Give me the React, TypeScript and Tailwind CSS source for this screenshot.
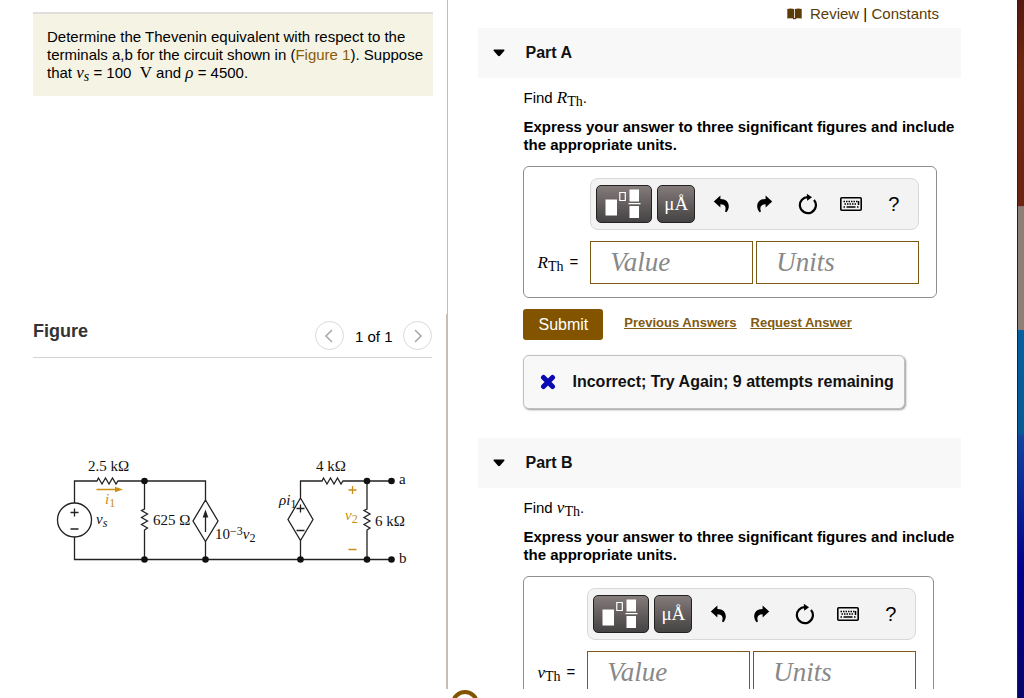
import type { ReactNode } from 'react'

interface SymbolProps {
  base: string
  sub: string
}

function MathSymbol({ base, sub }: SymbolProps) {
  return (
    <span className="font-['Liberation_Serif',serif] text-[17px] leading-none">
      <i>{base}</i>
      <span className="relative top-[3px] text-[14px]">{sub}</span>
    </span>
  )
}

function BookIcon() {
  return (
    <svg width="15" height="12" viewBox="0 0 15 12" fill="#5a3c08" aria-hidden="true">
      <path d="M0.300 1Q3.500 0 7 1V10.600Q3.500 10 0.300 10.600ZM7.800 1Q11.500 0 14.700 1V10.600Q11.500 10 7.800 10.600Z" />
      <path d="M6 10h3v1.200h-3z" />
    </svg>
  )
}

function TemplateIcon() {
  return (
    <svg width="54" height="36" viewBox="0 0 54 36" aria-hidden="true">
      <path fill="#fff" d="M8.500 13.500h11.500v16h-11.500zM32.500 3.500h9.500v12h-9.500zM32.500 20h9.500v12h-9.500zM31.500 17h12v1.300h-12z" />
      <path fill="none" stroke="#fff" strokeWidth="1.200" d="M22.800 6.500h5.500v8h-5.500z" />
    </svg>
  )
}

function UndoIcon() {
  return (
    <svg width="17" height="18" viewBox="0 0 17 18" aria-hidden="true">
      <path d="M0.800 6.600L7.400 0.600V4C13 4 15.800 7 15.800 11.500C15.800 13.600 14.800 15.800 13.400 17.200L12 16.600C13.600 12.200 12.200 9.400 7.400 9.200V12.600Z" />
    </svg>
  )
}

function RedoIcon() {
  return (
    <svg width="17" height="18" viewBox="0 0 17 18" aria-hidden="true">
      <path d="M16.200 6.600L9.600 0.600V4C4 4 1.200 7 1.200 11.500C1.200 13.600 2.200 15.800 3.600 17.200L5 16.600C3.400 12.200 4.800 9.400 9.600 9.200V12.600Z" />
    </svg>
  )
}

function ResetIcon() {
  return (
    <svg width="20" height="22" viewBox="0 0 20 22" aria-hidden="true">
      <path d="M10.500 4.200A8 8 0 1 0 16 7" fill="none" stroke="#000" strokeWidth="2.200" />
      <path d="M8.800 0.800L14 4.300L9.200 7.800Z" />
    </svg>
  )
}

function KeyboardIcon() {
  return (
    <svg width="22" height="14" viewBox="0 0 22 14" aria-hidden="true">
      <rect x="0.800" y="0.800" width="20.400" height="12.400" rx="1" fill="none" stroke="#000" strokeWidth="1.600" />
      <path d="M3.500 4.500H18.500M4.500 7H17" stroke="#000" strokeWidth="1.500" strokeDasharray="1.500 1" />
      <path d="M3.500 10h1.500M6.500 10h9M17 10h1.500M18.500 4v4" stroke="#000" strokeWidth="1.500" />
    </svg>
  )
}

function ToolButton({ label, children }: { label: string; children: ReactNode }) {
  return (
    <button type="button" aria-label={label} className="flex w-[43px] items-center justify-center text-[20px]">
      {children}
    </button>
  )
}

const darkButton =
  'flex h-[38px] items-center justify-center rounded-[5px] border border-[#222] bg-linear-to-b from-[#857b7b] to-[#454343] text-white'

const field =
  "h-[43px] w-[163px] border border-[#7a5a14] bg-white px-[19px] font-['Liberation_Serif',serif] text-[27px] italic placeholder:text-[#888]"

function AnswerBox({ base, sub }: SymbolProps) {
  return (
    <div className="flex w-fit items-end rounded-md border border-[#8e8e8e] bg-white pt-[11px] pr-[17px] pb-[13px] pl-[13px]">
      <div className="mr-3 flex h-[43px] items-center gap-[6px] whitespace-nowrap text-[15px]">
        <MathSymbol base={base} sub={sub} />
        <span>=</span>
      </div>
      <div>
        <div className="flex items-center gap-[5px] rounded-lg border border-[#d8d8d8] bg-[#f3f3f3] py-[6px] pr-[3px] pl-[5px]">
          <button type="button" aria-label="Templates" className={`${darkButton} w-14`}>
            <TemplateIcon />
          </button>
          <button
            type="button"
            className={`${darkButton} w-[38px] font-['Liberation_Serif',serif] text-[19px]`}
          >
            μÅ
          </button>
          <div className="flex">
            <ToolButton label="Undo"><UndoIcon /></ToolButton>
            <ToolButton label="Redo"><RedoIcon /></ToolButton>
            <ToolButton label="Reset"><ResetIcon /></ToolButton>
            <ToolButton label="Keyboard"><KeyboardIcon /></ToolButton>
            <ToolButton label="Help">?</ToolButton>
          </div>
        </div>
        <div className="mt-[11px] flex gap-[3px]">
          <input type="text" aria-label="Value" placeholder="Value" className={field} />
          <input type="text" aria-label="Units" placeholder="Units" className={field} />
        </div>
      </div>
    </div>
  )
}

interface PartProps extends SymbolProps {
  title: string
  children?: ReactNode
}

function Part({ title, base, sub, children }: PartProps) {
  return (
    <section>
      <h2 className="flex h-[50px] items-center bg-[#f8f8f8] pl-[15px] text-[16px] font-bold text-[#111]">
        <button type="button" className="flex items-center gap-5">
          <svg width="12" height="8" viewBox="0 0 12 8" aria-hidden="true">
            <path d="M1 0.500H11Q12 0.800 11.300 1.700L7 6.800Q6 7.700 5 6.800L0.700 1.700Q0 0.800 1 0.500Z" />
          </svg>
          {title}
        </button>
      </h2>
      <div className="pl-[45px]">
        <p className="pt-[10px] text-[15px] leading-5">
          Find <MathSymbol base={base} sub={sub} />.
        </p>
        <p className="mt-[10px] mb-3 text-[15px] leading-[18px] font-bold">
          Express your answer to three significant figures and include the appropriate units.
        </p>
        <AnswerBox base={base} sub={sub} />
        {children}
      </div>
    </section>
  )
}

function Circuit() {
  return (
    <svg
      width="365"
      height="115"
      viewBox="50 455 365 115"
      fill="none"
      stroke="#222"
      strokeWidth="1.300"
      role="img"
      aria-label="Circuit diagram"
    >
      <path d="M74.500 503V481H97l1.500-3 3.500 6 3.500-6 3.500 6 3.500-6 3.500 6 2-3H205.500V500M74.500 537V559.500H391.500" />
      <path d="M144.500 481V509l-3 1.500 6 3.500-6 3.500 6 3.500-6 3.500 6 3.500-3 2V559.500" />
      <path d="M205.500 500L218 521L205.500 541.500L193 521ZM205.500 541.500V559.500M205.500 532V515" />
      <path d="M300.500 498L313 519.500L300.500 540.500L288 519.500ZM300.500 540.500V559.500M300.500 498V481H322l1.500-3 3.500 6 3.500-6 3.500 6 3.500-6 3.500 6 2-3H391.500" />
      <path d="M367 481V509l-3 1.500 6 3.500-6 3.500 6 3.500-6 3.500 6 3.500-3 2V559.500" />
      <circle cx="74.500" cy="520" r="17" />
      <path d="M70.500 512.500h8M74.500 508.500v8M70.500 529h8M296.500 508.500h8M300.500 504.500v8M296.500 530.500h8" />
      <path d="M205.500 509.500l2.800 8h-5.600z" fill="#222" stroke="none" />
      <g fill="#111" stroke="none">
        <circle cx="144.500" cy="481" r="3.300" />
        <circle cx="144.500" cy="559.500" r="3.300" />
        <circle cx="205.500" cy="559.500" r="3.300" />
        <circle cx="300.500" cy="559.500" r="3.300" />
        <circle cx="367" cy="481" r="3.300" />
        <circle cx="367" cy="559.500" r="3.300" />
        <circle cx="391.500" cy="481" r="3.300" />
        <circle cx="391.500" cy="559.500" r="3.300" />
      </g>
      <g stroke="#c98f16">
        <path d="M96.500 489.500H116M348.500 490h8M352.500 486v8M348.500 549.500h8" />
        <path d="M115 486.800l8 2.700-8 2.700z" fill="#c98f16" stroke="none" />
      </g>
      <g fill="#111" stroke="none" className="font-['Liberation_Serif',serif] text-[15px]">
        <text x="88" y="471">2.5 kΩ</text>
        <text x="153" y="525">625 Ω</text>
        <text x="316" y="471">4 kΩ</text>
        <text x="375" y="526">6 kΩ</text>
        <text x="399" y="484">a</text>
        <text x="399" y="563">b</text>
        <text x="96" y="524" fontStyle="italic">v<tspan dy="3" fontSize="12">s</tspan></text>
        <text x="279" y="505" fontStyle="italic">ρi<tspan dy="3" fontSize="12" fontStyle="normal">1</tspan></text>
        <text x="215" y="539">10<tspan dy="-4" fontSize="12">−3</tspan><tspan dy="4" fontStyle="italic">v</tspan><tspan dy="3" fontSize="12">2</tspan></text>
        <g fill="#c98f16">
          <text x="105" y="504" fontStyle="italic">i<tspan dy="3" fontSize="12" fontStyle="normal">1</tspan></text>
          <text x="345" y="520" fontStyle="italic">v<tspan dy="3" fontSize="12" fontStyle="normal">2</tspan></text>
        </g>
      </g>
    </svg>
  )
}

function PagerButton({ label, path }: { label: string; path: string }) {
  return (
    <button
      type="button"
      aria-label={label}
      className="flex size-[29px] items-center justify-center rounded-full border border-[#d9d9d9]"
    >
      <svg width="10" height="14" viewBox="0 0 10 14" fill="none" stroke="#aaa" strokeWidth="1.600" aria-hidden="true">
        <path d={path} />
      </svg>
    </button>
  )
}

export default function App() {
  return (
    <div className="flex h-screen overflow-hidden bg-white font-['Liberation_Sans',Arial,sans-serif] text-black">
      <div className="flex min-w-0 flex-1 flex-col">
        <div className="flex min-h-0 flex-1">
          <aside className="flex w-[44.1%] shrink-0 flex-col">
            <div className="h-[314px] shrink-0 border-r border-[#c9bdb3] pt-3 pr-[14px] pl-[33px]">
              <p className="border-t-2 border-[#dedfdc] bg-[#f5f3e4] py-[14px] pr-1 pl-[14px] text-[15px] leading-[18px]">
                Determine the Thevenin equivalent with respect to the terminals a,b for the circuit shown in (
                <a href="#figure" className="text-[#8a5c0a]">Figure 1</a>). Suppose that{' '}
                <span className="font-['Liberation_Serif',serif] text-[17px] leading-none italic">
                  v<span className="relative top-[3px] text-[14px]">s</span>
                </span>{' '}
                = 100 &nbsp;
                <span className="font-['Liberation_Serif',serif] text-[17px] leading-none">V</span> and{' '}
                <i className="font-['Liberation_Serif',serif] text-[17px] leading-none">ρ</i> = 4500.
              </p>
            </div>
            <div id="figure" className="flex-1 border-r-2 border-[#c9bdb3] pr-[14px] pl-[33px]">
              <div className="flex h-11 items-center justify-between border-b border-[#d4d4d4]">
                <h2 className="pb-[9px] text-[18px] font-bold text-[#333]">Figure</h2>
                <div className="flex items-center gap-[11px] text-[15px]">
                  <PagerButton label="Previous figure" path="M8 1L2 7L8 13" />
                  <span className="pt-1">1 of 1</span>
                  <PagerButton label="Next figure" path="M2 1L8 7L2 13" />
                </div>
              </div>
              <div className="pt-[97px] pl-[17px]">
                <Circuit />
              </div>
            </div>
          </aside>
          <main className="min-w-0 flex-1 overflow-hidden pr-14 pl-[30px]">
            <div className="flex h-7 items-center justify-end gap-2 pr-[22px] text-[15px]">
              <BookIcon />
              <nav>
                <a href="#review" className="text-[#5a3c08]">Review</a> |{' '}
                <a href="#constants" className="text-[#5a3c08]">Constants</a>
              </nav>
            </div>
            <Part title="Part A" base="R" sub="Th">
              <div className="mt-[11px] flex items-center">
                <button type="button" className="h-[31px] rounded-[3px] bg-[#825400] px-[15px] text-[16px] text-white">
                  Submit
                </button>
                <div className="flex gap-[14px] pb-[3px] pl-[21px] text-[13px] font-bold text-[#825a10] underline">
                  <a href="#previous">Previous Answers</a>
                  <a href="#request">Request Answer</a>
                </div>
              </div>
              <div className="mt-[15px] mb-[29px] flex h-[54px] w-fit items-center gap-4 rounded-md border border-[#c0c0c0] bg-[#f8f8f8] pr-[10px] pl-4 text-[16px] font-bold text-[#111] shadow-[1px_1px_2px_#999]">
                <svg width="16" height="16" viewBox="0 0 16 16" stroke="#0a0ab4" strokeWidth="5" strokeLinecap="round" aria-hidden="true">
                  <path d="M3.500 3.500L12.500 12.500M12.500 3.500L3.500 12.500" />
                </svg>
                <p>Incorrect; Try Again; 9 attempts remaining</p>
              </div>
            </Part>
            <Part title="Part B" base="v" sub="Th" />
          </main>
        </div>
        <footer className="h-[9px] shrink-0 overflow-hidden pl-[451px]">
          <div className="mt-px size-7 rounded-full border-4 border-[#825400]" />
        </footer>
      </div>
      <div className="w-[7px] shrink-0 border-l border-[#222] bg-[linear-gradient(to_bottom,#54180f_0%,#6d2810_10%,#6d2412_29.5%,#8c8079_29.6%,#8c8079_47.200%,#0660a0_47.300%,#065a96_62%,#1244a0_62.500%,#00008c_82%,#06066e_100%)]" />
    </div>
  )
}
